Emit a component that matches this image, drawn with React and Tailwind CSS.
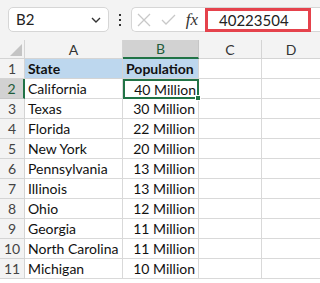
import React from "react";

const rows = [
  ["California", "40 Million"],
  ["Texas", "30 Million"],
  ["Florida", "22 Million"],
  ["New York", "20 Million"],
  ["Pennsylvania", "13 Million"],
  ["Illinois", "13 Million"],
  ["Ohio", "12 Million"],
  ["Georgia", "11 Million"],
  ["North Carolina", "11 Million"],
  ["Michigan", "10 Million"],
];

const font = { fontFamily: "Lato, 'Open Sans', sans-serif" };

export default function App() {
  return (
    <div className="w-[320px] h-[283px] overflow-hidden bg-white" style={font}>
      {/* toolbar */}
      <div className="h-[40px] bg-[#f3f3f3] flex items-start pt-[7px] pl-[8px]">
        <div className="w-[101px] h-[25px] bg-white border border-[#d6d6d6] rounded-[5px] flex items-center justify-between pl-[7px] pr-[7px]">
          <span className="text-[15px] text-[#222]">B2</span>
          <svg width="10" height="6" viewBox="0 0 10 6">
            <path d="M1 1 L5 5 L9 1" fill="none" stroke="#333" strokeWidth="1.4" />
          </svg>
        </div>
        <div className="w-[22px] h-[25px] flex flex-col items-center justify-center gap-[3px]">
          <span className="w-[2px] h-[2px] bg-[#333]" />
          <span className="w-[2px] h-[2px] bg-[#333]" />
          <span className="w-[2px] h-[2px] bg-[#333]" />
        </div>
        <div className="flex-1 h-[25px] bg-white border border-[#d6d6d6] border-r-0 rounded-l-[5px] flex items-center">
          <div className="w-[24px] flex justify-center">
            <svg width="14" height="14" viewBox="0 0 14 14">
              <path d="M1 1 L13 13 M13 1 L1 13" stroke="#c8c8c8" strokeWidth="1.3" />
            </svg>
          </div>
          <div className="w-[24px] flex justify-center">
            <svg width="15" height="12" viewBox="0 0 15 12">
              <path d="M1 6 L5 10 L14 1" fill="none" stroke="#c8c8c8" strokeWidth="1.3" />
            </svg>
          </div>
          <div className="w-[24px] flex justify-center">
            <span className="text-[17px] italic text-[#333]" style={{ fontFamily: "'Liberation Serif', serif" }}>fx</span>
          </div>
          <div className="ml-[1px] mt-[1px] w-[106px] h-[24px] border-[3px] border-[#e5424c] flex items-center pl-[11px]">
            <span className="text-[15px] text-[#222]">40223504</span>
          </div>
        </div>
      </div>
      {/* grid */}
      <div className="grid grid-cols-[25px_98px_76px_63px_1fr] grid-rows-[19px_repeat(11,20px)] text-[14px] text-[#111]">
        {/* header row */}
        <div className="bg-[#f3f3f3] border-r border-b border-[#d4d4d4] relative">
          <svg className="absolute right-[2px] bottom-[2px]" width="12" height="12" viewBox="0 0 12 12">
            <path d="M12 0 L12 12 L0 12 Z" fill="#c4c4c4" />
          </svg>
        </div>
        <div className="bg-[#f3f3f3] border-r border-b border-[#d4d4d4] flex items-center justify-center text-[14px] text-[#333]">A</div>
        <div className="bg-[#d2d2d2] border-r border-[#c6c6c6] border-b-2 border-b-[#217346] flex items-center justify-center text-[14px] text-[#1f5c3a]">B</div>
        <div className="bg-[#f3f3f3] border-r border-b border-[#d4d4d4] flex items-center justify-center text-[14px] text-[#333]">C</div>
        <div className="bg-[#f3f3f3] border-b border-[#d4d4d4] flex items-center justify-center text-[14px] text-[#333]">D</div>

        {/* row 1 */}
        <div className="bg-[#f3f3f3] border-r border-b border-[#d4d4d4] flex items-center justify-center text-[14px] text-[#444]">1</div>
        <div className="bg-[#bdd7ee] border-r border-b border-[#d4d4d4] flex items-center pl-[3px] font-bold">State</div>
        <div className="bg-[#bdd7ee] border-r border-b border-[#d4d4d4] flex items-center pl-[3px] font-bold">Population</div>
        <div className="border-r border-b border-[#d9d9d9]" />
        <div className="border-b border-[#d9d9d9]" />

        {rows.map(([s, p], i) => {
          const n = i + 2;
          const active = n === 2;
          return (
            <React.Fragment key={n}>
              <div
                className={
                  active
                    ? "bg-[#d2d2d2] border-r-2 border-r-[#217346] border-b border-b-[#c6c6c6] flex items-center justify-center text-[14px] text-[#1f5c3a]"
                    : "bg-[#f3f3f3] border-r border-b border-[#d4d4d4] flex items-center justify-center text-[14px] text-[#444]"
                }
              >
                {n}
              </div>
              <div className="border-r border-b border-[#d9d9d9] flex items-center pl-[3px] whitespace-nowrap">{s}</div>
              <div className={active ? "relative border-2 border-[#217346] flex items-center justify-end pr-[1px]" : "border-r border-b border-[#d9d9d9] flex items-center justify-end pr-[3px]"}>
                {p}
                {active && <span className="absolute right-[-4px] bottom-[-4px] w-[6px] h-[6px] bg-[#217346] border border-white" />}
              </div>
              <div className="border-r border-b border-[#d9d9d9]" />
              <div className="border-b border-[#d9d9d9]" />
            </React.Fragment>
          );
        })}
      </div>
    </div>
  );
}
